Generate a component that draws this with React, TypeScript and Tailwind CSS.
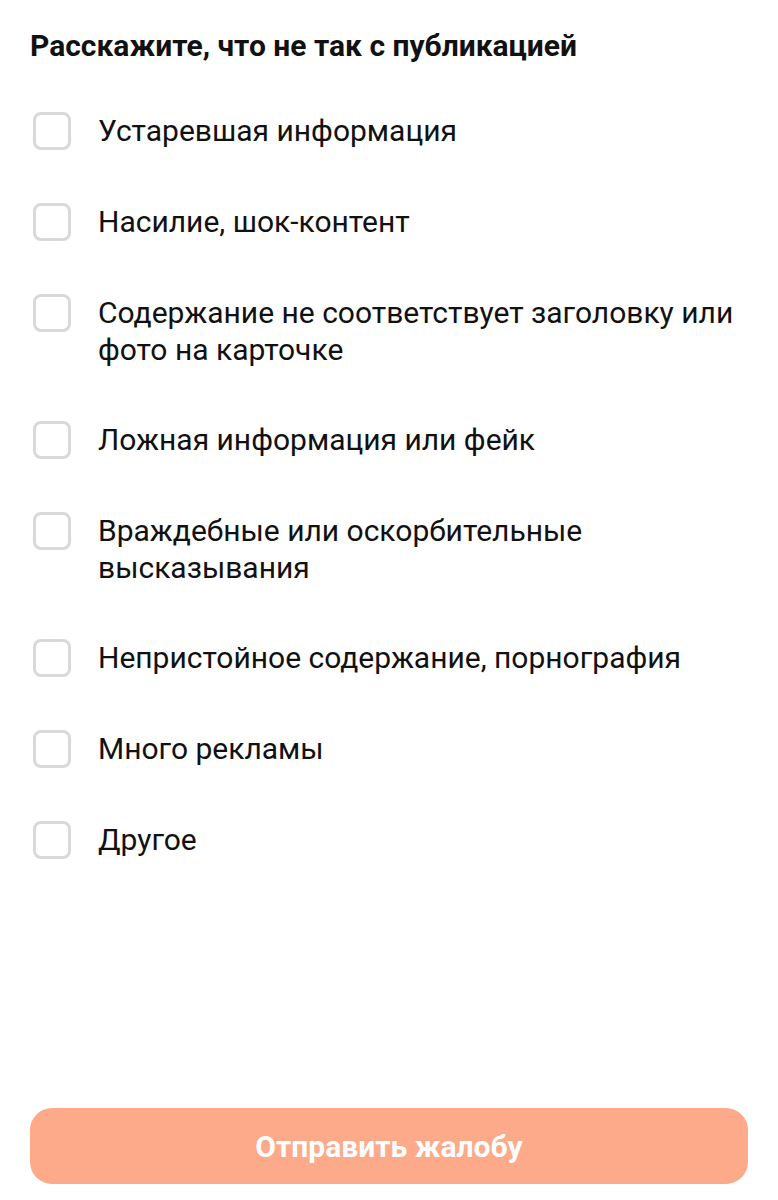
const reasons = [
  "Устаревшая информация",
  "Насилие, шок-контент",
  "Содержание не соответствует заголовку или фото на карточке",
  "Ложная информация или фейк",
  "Враждебные или оскорбительные высказывания",
  "Непристойное содержание, порнография",
  "Много рекламы",
  "Другое",
];

export default function App() {
  return (
    <main className="h-[1200px] w-full bg-white flex flex-col font-['Roboto',sans-serif] text-[#111]">
      <h1 className="pl-[30px] pt-[28px] text-[30px] font-bold leading-[36px]">
        Расскажите, что не так с публикацией
      </h1>

      <div className="flex flex-col gap-[53px] mt-[48px] pr-[30px]">
        {reasons.map((r, i) => (
          <label key={i} className="flex items-start">
            <span className="ml-[33px] w-[38px] h-[38px] shrink-0 rounded-[8px] border-[3px] border-[#d9d9d9]" />
            <span className="ml-[27px] text-[30px] leading-[37px] text-[#111]">{r}</span>
          </label>
        ))}
      </div>

      <div className="mt-auto px-[30px] pb-[16px]">
        <button className="w-full h-[76px] rounded-[22px] bg-[#fdaa8b] text-white text-[30px] font-bold">
          Отправить жалобу
        </button>
      </div>
    </main>
  );
}
